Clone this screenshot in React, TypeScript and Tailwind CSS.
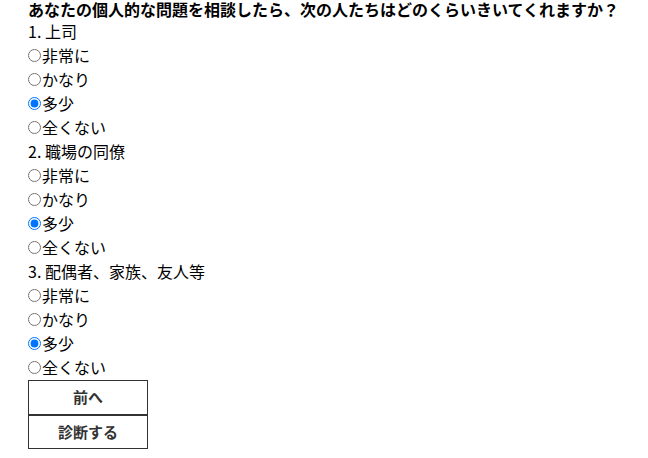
import React from 'react';

const questions = [
  { label: '1. 上司', name: 'q1' },
  { label: '2. 職場の同僚', name: 'q2' },
  { label: '3. 配偶者、家族、友人等', name: 'q3' },
];

const options = ['非常に', 'かなり', '多少', '全くない'];

export default function App() {
  return (
    <div
      className="min-h-[458px] bg-white pl-[28px] text-black"
      style={{ fontFamily: '"Noto Sans CJK JP", "Noto Sans", sans-serif' }}
    >
      <h1 className="text-[16px] font-bold leading-[19px] m-0">
        あなたの個人的な問題を相談したら、次の人たちはどのくらいきいてくれますか？
      </h1>
      {questions.map((q) => (
        <div key={q.name}>
          <div className="text-[16px] leading-[24px]">{q.label}</div>
          {options.map((opt) => (
            <label key={opt} className="flex items-center h-[24px] text-[16px]">
              <input
                type="radio"
                name={q.name}
                defaultChecked={opt === '多少'}
                className="m-0 mr-[1px] w-[13px] h-[13px]"
              />
              <span>{opt}</span>
            </label>
          ))}
        </div>
      ))}
      <div className="flex flex-col w-[120px] mt-[1px]">
        <button className="h-[35px] border border-[#333] bg-white text-[15px] font-bold text-[#333]">
          前へ
        </button>
        <button className="h-[35px] border border-[#333] bg-white text-[15px] font-bold text-[#333] -mt-px border-t-2">
          診断する
        </button>
      </div>
    </div>
  );
}
